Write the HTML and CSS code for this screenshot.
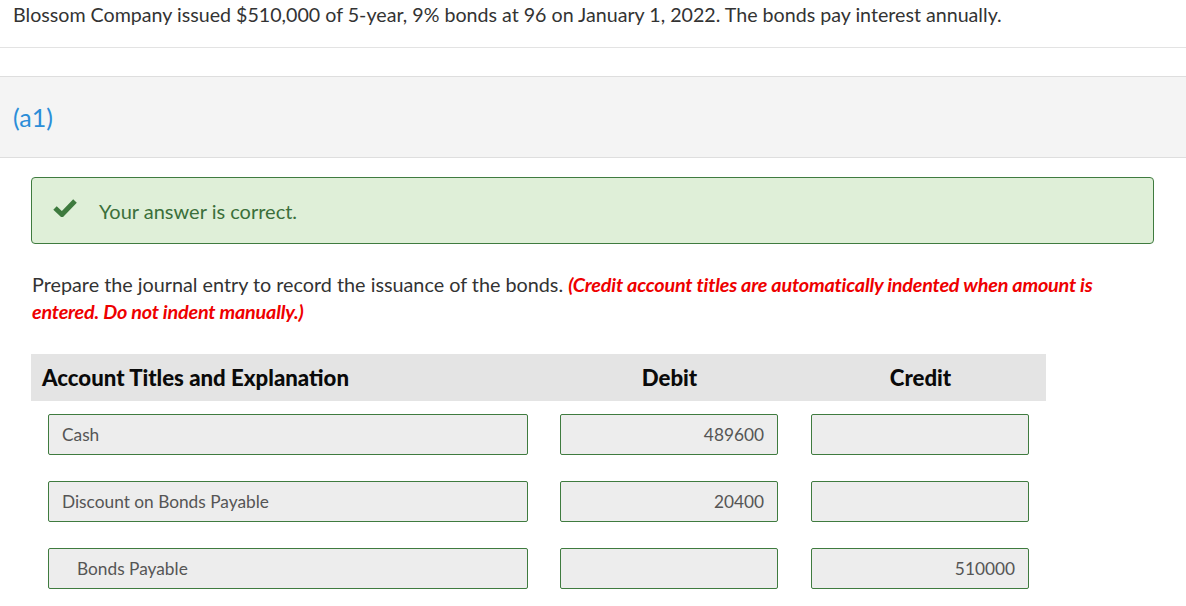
FILE: index.html
```html
<!DOCTYPE html>
<html>
<head>
<meta charset="utf-8">
<link rel="stylesheet" href="styles.css">
</head>
<body>
<div class="question">Blossom Company issued $510,000 of 5-year, 9% bonds at 96 on January 1, 2022. The bonds pay interest annually.</div>
<div class="part-head"><span class="part-label">(a1)</span></div>
<div class="part-body">
  <div class="alert">
    <svg class="check" width="24" height="19" viewBox="0 0 24 19"><path d="M2 10 L9 16.5 L22 3" fill="none" stroke="#3e7a3e" stroke-width="5" stroke-linejoin="miter" stroke-linecap="butt"/></svg>
    <span class="alert-text">Your answer is correct.</span>
  </div>
  <p class="instr">Prepare the journal entry to record the issuance of the bonds. <em class="warn">(Credit account titles are automatically indented when amount is entered. Do not indent manually.)</em></p>
  <div class="journal">
    <div class="jhead">
      <div class="c-acct">Account Titles and Explanation</div>
      <div class="c-num">Debit</div>
      <div class="c-num">Credit</div>
    </div>
    <div class="jrow">
      <div class="c-acct"><div class="field">Cash</div></div>
      <div class="c-num"><div class="field num">489600</div></div>
      <div class="c-num"><div class="field num"></div></div>
    </div>
    <div class="jrow">
      <div class="c-acct"><div class="field">Discount on Bonds Payable</div></div>
      <div class="c-num"><div class="field num">20400</div></div>
      <div class="c-num"><div class="field num"></div></div>
    </div>
    <div class="jrow">
      <div class="c-acct"><div class="field indent">Bonds Payable</div></div>
      <div class="c-num"><div class="field num"></div></div>
      <div class="c-num"><div class="field num">510000</div></div>
    </div>
  </div>
</div>
</body>
</html>
```
FILE: styles.css
```css
html, body {
  margin: 0;
  padding: 0;
  background: #ffffff;
  font-family: Lato, "Open Sans", sans-serif;
  color: #333333;
}
.question {
  font-size: 19.65px;
  line-height: 24px;
  padding: 3px 13px 20px;
  border-bottom: 1px solid #e3e3e3;
  color: #333;
}
.part-head {
  margin-top: 28px;
  height: 80px;
  background: #f4f4f4;
  border-top: 1px solid #dedede;
  border-bottom: 1px solid #dedede;
  display: flex;
  align-items: center;
  padding-left: 13px;
}
.part-label {
  font-size: 25px;
  color: #2b8dd8;
}
.part-body {
  padding: 19px 32px 0 31px;
}
.alert {
  height: 67px;
  background: #dfefd8;
  border: 1px solid #3f7b3f;
  border-radius: 4px;
  display: flex;
  align-items: center;
  padding-left: 21px;
  box-sizing: border-box;
}
.check {
  display: block;
  margin-top: -6px;
}
.alert-text {
  margin-left: 22px;
  font-size: 20px;
  color: #3b6f3b;
}
.instr {
  margin: 27px 0 0 1px;
  font-size: 19.8px;
  line-height: 27px;
  color: #333;
  max-width: 1080px;
}
.warn {
  color: #ee0000;
  font-weight: 700;
  font-style: italic;
  letter-spacing: -0.2px;
}
.journal {
  margin-top: 29px;
  width: 1015px;
}
.jhead {
  display: flex;
  height: 47px;
  align-items: center;
  background: #e4e4e4;
  font-weight: 900;
  font-size: 22.2px;
  color: #0a0a0a;
}
.jhead .c-acct {
  padding-left: 11px;
  box-sizing: border-box;
}
.jhead .c-num {
  text-align: center;
}
.c-acct {
  width: 513px;
}
.c-num {
  width: 251px;
}
.jrow {
  display: flex;
  margin-top: 13px;
}
.jrow + .jrow {
  margin-top: 26px;
}
.jrow .c-acct {
  padding: 0 16px 0 17px;
  box-sizing: border-box;
}
.jrow .c-num {
  padding: 0 17px 0 16px;
  box-sizing: border-box;
}
.field {
  height: 41px;
  box-sizing: border-box;
  border: 1px solid #3f7b3f;
  border-radius: 2px;
  background: #ededed;
  font-size: 17.3px;
  color: #555;
  display: flex;
  align-items: center;
  padding: 0 13px;
}
.field.indent {
  padding-left: 28px;
}
.field.num {
  justify-content: flex-end;
}
```
